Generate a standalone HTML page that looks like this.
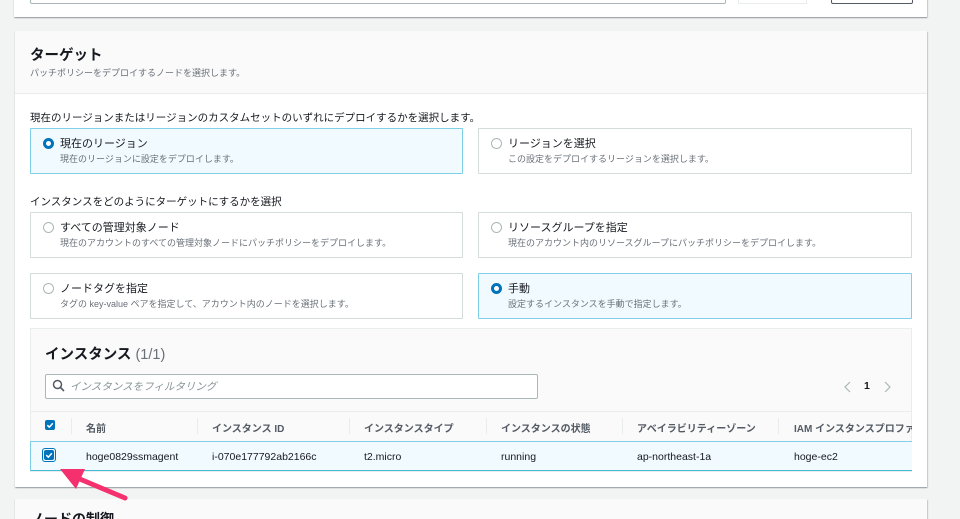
<!DOCTYPE html>
<html><head><meta charset="utf-8"><style>
html,body{margin:0;width:960px;height:519px;overflow:hidden}
body{background:#f2f3f3;font-family:"Liberation Sans","Noto Sans CJK JP",sans-serif;color:#16191f;position:relative}
.a{position:absolute}
.panel{background:#fff;box-shadow:0 1px 1px rgba(0,28,36,.3),1px 1px 1px rgba(0,28,36,.15)}
.card{position:absolute;border:1px solid #d5dbdb;background:#fff;border-radius:1px;box-sizing:border-box;height:46px}
.card.sel{border:1px solid #7fcfe6;background:#f1faff}
.card .r{position:absolute;left:12px;top:9px;width:9px;height:9px;border:1px solid #aab7b8;border-radius:50%}
.card.sel .r{border:3px solid #0073bb;width:5px;height:5px;background:#fff}
.card .t{position:absolute;left:29px;top:6px;font-size:11px}
.card .d{position:absolute;left:29px;top:23px;font-size:9px;color:#687078}
.lbl{position:absolute;left:30px;font-size:10.5px}
.th{position:absolute;top:420px;font-size:10px;font-weight:bold;color:#545b64}
.td{position:absolute;top:451px;font-size:10.5px}
.sep{position:absolute;top:418px;width:1px;height:16px;background:#eaeded}
</style></head><body>
<div class="a panel" style="left:14px;top:-5px;width:913px;height:22px"></div>
<div class="a" style="left:30px;top:-5px;width:694px;height:7px;border:1px solid #aab7b8;border-radius:2px;background:#fff"></div>
<div class="a" style="left:738px;top:-5px;width:67px;height:7px;border:1px solid #eaeded;background:#fff"></div>
<div class="a" style="left:831px;top:-5px;width:80px;height:7px;border:1px solid #545b64;border-radius:2px;background:#fff"></div>

<div class="a panel" style="left:15px;top:31px;width:912px;height:456px"></div>
<div class="a" style="left:15px;top:31px;width:912px;height:62px;background:#fafafa;border-bottom:1px solid #eaeded"></div>
<div class="a" style="left:30px;top:44px;font-size:14.5px;font-weight:bold">ターゲット</div>
<div class="a" style="left:30px;top:66px;font-size:9px;color:#687078">パッチポリシーをデプロイするノードを選択します。</div>

<div class="lbl" style="top:110px">現在のリージョンまたはリージョンのカスタムセットのいずれにデプロイするかを選択します。</div>
<div class="card sel" style="left:30px;top:128px;width:433px"><div class="r"></div><div class="t">現在のリージョン</div><div class="d">現在のリージョンに設定をデプロイします。</div></div>
<div class="card" style="left:478px;top:128px;width:434px"><div class="r"></div><div class="t">リージョンを選択</div><div class="d">この設定をデプロイするリージョンを選択します。</div></div>

<div class="lbl" style="top:194px">インスタンスをどのようにターゲットにするかを選択</div>
<div class="card" style="left:30px;top:212px;width:433px"><div class="r"></div><div class="t">すべての管理対象ノード</div><div class="d">現在のアカウントのすべての管理対象ノードにパッチポリシーをデプロイします。</div></div>
<div class="card" style="left:478px;top:212px;width:434px"><div class="r"></div><div class="t">リソースグループを指定</div><div class="d">現在のアカウント内のリソースグループにパッチポリシーをデプロイします。</div></div>
<div class="card" style="left:30px;top:273px;width:433px"><div class="r"></div><div class="t">ノードタグを指定</div><div class="d">タグの key-value ペアを指定して、アカウント内のノードを選択します。</div></div>
<div class="card sel" style="left:478px;top:273px;width:434px"><div class="r"></div><div class="t">手動</div><div class="d">設定するインスタンスを手動で指定します。</div></div>

<div class="a" style="left:30px;top:328px;width:882px;height:144px;background:#fafafa;border:1px solid #eaeded;box-sizing:border-box"></div>
<div class="a" style="left:45px;top:343px;font-size:14.5px;font-weight:bold">インスタンス <span style="font-weight:normal;color:#687078">(1/1)</span></div>
<div class="a" style="left:45px;top:374px;width:491px;height:23px;border:1px solid #aab7b8;border-radius:2px;background:#fff"></div>
<svg class="a" style="left:52px;top:379px" width="13" height="13" viewBox="0 0 13 13"><circle cx="5.5" cy="5.5" r="4" fill="none" stroke="#545b64" stroke-width="1.5"/><path d="M8.5 8.5L12 12" stroke="#545b64" stroke-width="1.6"/></svg>
<div class="a" style="left:70px;top:379px;font-size:10.5px;font-style:italic;color:#879596">インスタンスをフィルタリング</div>
<svg class="a" style="left:842px;top:380px" width="50" height="14"><path d="M8 2L3 7l5 5" fill="none" stroke="#aab7b8" stroke-width="1.2"/><path d="M43 2l5 5-5 5" fill="none" stroke="#aab7b8" stroke-width="1.2"/></svg>
<div class="a" style="left:864px;top:380px;font-size:10.5px;font-weight:bold">1</div>

<div class="a" style="left:30px;top:411px;width:882px;height:1px;background:#eaeded"></div>
<svg class="a" style="left:45px;top:420px" width="10" height="10"><rect width="10" height="10" rx="2" fill="#0073bb"/><path d="M2.3 5.2l2 2 3.5-4" fill="none" stroke="#fff" stroke-width="1.5"/></svg>
<div class="sep" style="left:71px"></div>
<div class="th" style="left:86px">名前</div>
<div class="sep" style="left:197px"></div>
<div class="th" style="left:212px">インスタンス ID</div>
<div class="sep" style="left:349px"></div>
<div class="th" style="left:364px">インスタンスタイプ</div>
<div class="sep" style="left:486px"></div>
<div class="th" style="left:501px">インスタンスの状態</div>
<div class="sep" style="left:622px"></div>
<div class="th" style="left:637px">アベイラビリティーゾーン</div>
<div class="sep" style="left:778px"></div>
<div class="th" style="left:794px;white-space:nowrap;width:118px;overflow:hidden">IAM インスタンスプロファイル</div>

<div class="a" style="left:30px;top:441px;width:882px;height:30px;background:#f1faff;border-top:1px solid #7fcfe6;border-bottom:1px solid #44b9d6;border-left:1px solid #7fcfe6;box-sizing:border-box"></div>
<div class="a" style="left:42px;top:448px;width:14px;height:14px;border:1px solid #0073bb;border-radius:3px;box-sizing:border-box"></div>
<svg class="a" style="left:44px;top:450px" width="10" height="10"><rect width="10" height="10" rx="2" fill="#0073bb"/><path d="M2.3 5.2l2 2 3.5-4" fill="none" stroke="#fff" stroke-width="1.5"/></svg>
<div class="td" style="left:86px">hoge0829ssmagent</div>
<div class="td" style="left:212px">i-070e177792ab2166c</div>
<div class="td" style="left:364px">t2.micro</div>
<div class="td" style="left:501px">running</div>
<div class="td" style="left:637px">ap-northeast-1a</div>
<div class="td" style="left:794px">hoge-ec2</div>

<div class="a panel" style="left:15px;top:499px;width:912px;height:20px;background:#fafafa"></div>
<div class="a" style="left:30px;top:511px;font-size:14px;font-weight:bold;line-height:16px">ノードの制御</div>

<svg class="a" style="left:55px;top:460px" width="80" height="45"><path d="M70 38L20 17" stroke="#f5306e" stroke-width="5" stroke-linecap="round"/><path d="M5 9L30 9L21 29Z" fill="#f5306e"/></svg>
</body></html>
